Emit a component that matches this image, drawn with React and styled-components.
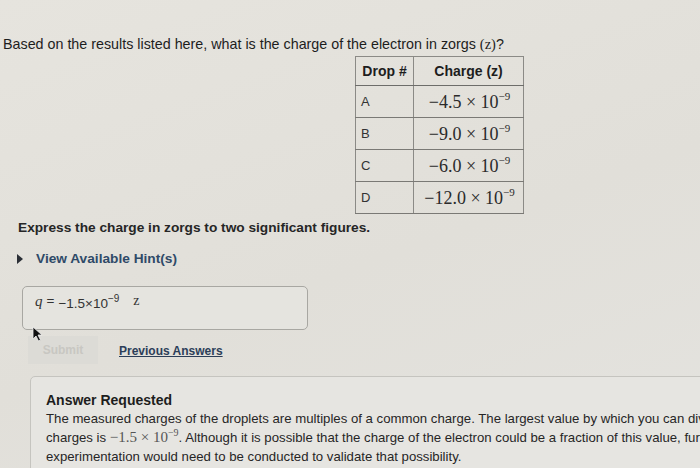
import React from "react";
import styled, { createGlobalStyle } from "styled-components";

const GlobalStyle = createGlobalStyle`
  html, body {
    margin: 0;
    padding: 0;
    width: 700px;
    height: 468px;
    overflow: hidden;
    background: #e3e1db;
  }
  body {
    font-family: "Liberation Sans", Arial, sans-serif;
    color: #1d1d1d;
  }
`;

const Page = styled.div`
  width: 700px;
  height: 468px;
  overflow: hidden;
  padding: 34px 0 0 3px;
  box-sizing: border-box;
  background: linear-gradient(160deg, #e6e4de 0%, #e1dfd9 55%, #e4e3df 100%);
`;

const Question = styled.p`
  margin: 0;
  font-size: 14.3px;
  line-height: 20px;
  white-space: nowrap;
`;

const Var = styled.span`
  font-family: "Liberation Serif", "Times New Roman", serif;
  font-size: 14.5px;
`;

const Table = styled.table`
  margin: 2px 0 0 352px;
  border-collapse: collapse;
  border: 1.5px solid #6d6d6a;
`;

const Th = styled.th`
  height: 28px;
  padding: 0 6px;
  font-size: 14px;
  font-weight: bold;
  text-align: center;
  border: 1px solid #8b8a86;
  border-bottom: 1.5px solid #6d6d6a;
  width: ${(p) => p.w}px;
`;

const Td = styled.td`
  height: 31px;
  padding: 0 5px;
  font-size: 13px;
  color: #333;
  border: 1px solid #8b8a86;
  border-bottom: 1.5px solid #7a7975;
  text-align: left;
`;

const ValueCell = styled(Td)`
  text-align: center;
  padding: 0 3px 0 5px;
  font-family: "Liberation Serif", "Times New Roman", serif;
  font-size: 18px;
  line-height: 20px;
  color: #2a2a2a;
  white-space: nowrap;
  sup {
    font-size: 11px;
    line-height: 0;
    vertical-align: 8px;
  }
`;

const Prompt = styled.p`
  margin: 6px 0 0 15px;
  font-size: 13.7px;
  font-weight: bold;
  color: #262626;
`;

const HintRow = styled.div`
  display: flex;
  align-items: center;
  gap: 13px;
  margin: 16px 0 0 14px;
  font-size: 13.7px;
  font-weight: bold;
  color: #2f4a68;
`;

const Caret = styled.span`
  width: 0;
  height: 0;
  border-top: 5px solid transparent;
  border-bottom: 5px solid transparent;
  border-left: 6px solid #2b2f36;
`;

const AnswerBox = styled.div`
  width: 286px;
  height: 44px;
  margin: 20px 0 0 19px;
  box-sizing: border-box;
  border: 1.5px solid #a8a7a2;
  border-radius: 5px;
  background: #e5e4df;
  display: flex;
  align-items: flex-start;
  padding: 6px 0 0 12px;
  font-size: 13.5px;
  color: #333;
`;

const Q = styled.span`
  font-family: "Liberation Serif", "Times New Roman", serif;
  font-style: italic;
  font-size: 15px;
  margin-right: 4px;
`;

const Num = styled.span`
  margin-left: 4px;
  sup {
    font-size: 10px;
    vertical-align: 6px;
  }
`;

const Unit = styled.span`
  font-family: "Liberation Serif", "Times New Roman", serif;
  font-size: 14px;
  margin-left: 14px;
`;

const Actions = styled.div`
  position: relative;
  display: flex;
  align-items: flex-end;
  gap: 21px;
  margin: 6px 0 0 25px;
`;

const Submit = styled.div`
  width: 70px;
  height: 28px;
  background: #dcdbd6;
  color: #c8c7c2;
  font-size: 12px;
  font-weight: bold;
  display: flex;
  align-items: center;
  justify-content: center;
`;

const PrevLink = styled.a`
  font-size: 12px;
  font-weight: bold;
  color: #2c3e58;
  text-decoration: underline;
  margin-bottom: 6px;
`;

const Pointer = styled.svg`
  position: absolute;
  left: 4px;
  top: -10px;
`;

const Feedback = styled.div`
  width: 760px;
  margin: 12px 0 0 27px;
  box-sizing: border-box;
  border: 1.5px solid #c5c4bf;
  border-radius: 5px;
  background: #e6e5e1;
  padding: 15px 0 10px 15px;
  font-size: 13.2px;
  line-height: 19px;
  color: #262626;
`;

const FeedbackTitle = styled.div`
  font-size: 14px;
  line-height: 17px;
  font-weight: bold;
  color: #1d1d1d;
`;

const FeedbackText = styled.p`
  margin: 0;
  white-space: nowrap;
  height: 19px;
`;

const Inline = styled.span`
  font-family: "Liberation Serif", "Times New Roman", serif;
  font-size: 15px;
  line-height: 0;
  color: #555;
  sup {
    font-size: 10px;
    line-height: 0;
    vertical-align: 6px;
  }
`;

const rows = [
  { drop: "A", value: "4.5" },
  { drop: "B", value: "9.0" },
  { drop: "C", value: "6.0" },
  { drop: "D", value: "12.0" },
];

export default function App() {
  return (
    <Page>
      <GlobalStyle />
      <Question>
        Based on the results listed here, what is the charge of the electron in zorgs <Var>(z)</Var>?
      </Question>
      <Table>
        <thead>
          <tr>
            <Th w={45}>Drop #</Th>
            <Th w={97}>Charge (z)</Th>
          </tr>
        </thead>
        <tbody>
          {rows.map((r) => (
            <tr key={r.drop}>
              <Td>{r.drop}</Td>
              <ValueCell>
                −{r.value} × 10<sup>−9</sup>
              </ValueCell>
            </tr>
          ))}
        </tbody>
      </Table>
      <Prompt>Express the charge in zorgs to two significant figures.</Prompt>
      <HintRow>
        <Caret />
        View Available Hint(s)
      </HintRow>
      <AnswerBox>
        <Q>q</Q>= <Num>−1.5×10<sup>−9</sup></Num>
        <Unit>z</Unit>
      </AnswerBox>
      <Actions>
        <Pointer width="12" height="16" viewBox="0 0 12 16">
          <path d="M1 1 L1 13 L4 10 L6.5 15 L8.5 14 L6 9 L10 9 Z" fill="#111" stroke="#eee" strokeWidth="0.8" />
        </Pointer>
        <Submit>Submit</Submit>
        <PrevLink>Previous Answers</PrevLink>
      </Actions>
      <Feedback>
        <FeedbackTitle>Answer Requested</FeedbackTitle>
        <FeedbackText>
          The measured charges of the droplets are multiples of a common charge. The largest value by which you can divide all the
        </FeedbackText>
        <FeedbackText>
          charges is <Inline>−1.5 × 10<sup>−9</sup></Inline>. Although it is possible that the charge of the electron could be a fraction of this value, further
        </FeedbackText>
        <FeedbackText>experimentation would need to be conducted to validate that possibility.</FeedbackText>
      </Feedback>
    </Page>
  );
}
